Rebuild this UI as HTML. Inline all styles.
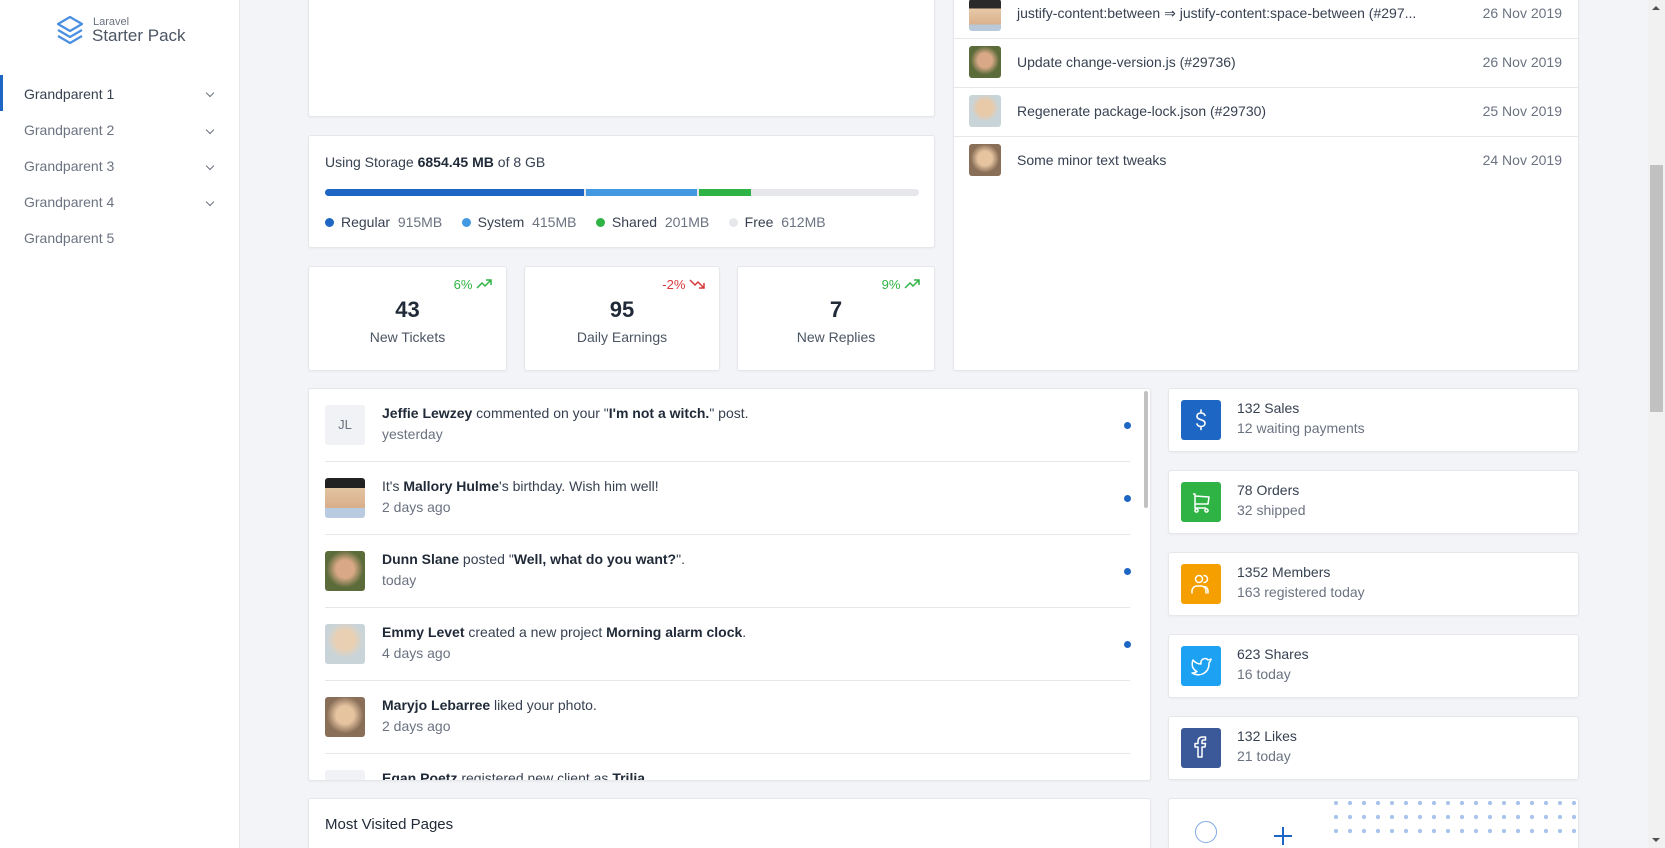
<!DOCTYPE html>
<html style="overflow:hidden;width:1665px;height:848px"><head><meta charset="utf-8"><style>
*{box-sizing:border-box;margin:0;padding:0}
html,body{overflow:hidden}
body{width:1665px;height:848px;background:#f3f4f7;font-family:"Liberation Sans",sans-serif;font-size:14px;color:#374151;position:relative}
.abs{position:absolute}
.card{position:absolute;background:#fff;border:1px solid #e5e7eb;border-radius:3px;box-shadow:0 1px 2px rgba(0,0,0,.04)}
.side{position:absolute;left:0;top:0;width:240px;height:848px;background:#fff;border-right:1px solid #e5e7eb}
.mi{position:absolute;left:24px;font-size:14px;color:#6b7280}
.chev{position:absolute;left:207px;width:6px;height:6px;border-right:1.3px solid #6b7280;border-bottom:1.3px solid #6b7280;transform:rotate(45deg)}
.av{position:absolute;border-radius:3px}
.crow{position:absolute;left:0;right:0;border-bottom:1px solid #e5e7eb}
.ctext{position:absolute;left:63px;font-size:14px;color:#374151}
.cdate{position:absolute;right:16px;font-size:14px;color:#6b7280}
.nrow{position:absolute;left:16px;width:805px;height:73px;border-bottom:1px solid #e5e7eb}
.nt{position:absolute;left:57px;top:0;font-size:14px;color:#374151;white-space:nowrap}
.nt b{color:#1f2937}
.ns{position:absolute;left:57px;top:21px;font-size:14px;color:#6b7280}
.dot{position:absolute;left:799px;top:18px;width:7px;height:7px;border-radius:50%;background:#1e66c4}
.sc .ic{position:absolute;left:12px;top:11px;width:40px;height:40px;border-radius:3px}
.sc .t1{position:absolute;left:68px;top:11px;font-size:14px;color:#374151}
.sc .t2{position:absolute;left:68px;top:31px;font-size:14px;color:#6b7280}
.stat .p{position:absolute;right:14px;top:10px;font-size:13px}
.stat .n{position:absolute;left:0;right:0;top:30px;text-align:center;font-size:22px;font-weight:bold;color:#1f2937}
.stat .l{position:absolute;left:0;right:0;top:62px;text-align:center;font-size:14px;color:#4b5563}
.lg{display:inline-block;width:9px;height:9px;border-radius:50%;margin-right:7px;vertical-align:-0px}
</style></head><body>
<div class="side">
  <svg class="abs" style="left:55px;top:15px" width="30" height="34" viewBox="0 0 30 34" fill="none" stroke="#4a8fe0" stroke-width="2.2" stroke-linejoin="round"><path d="M15 2 L27 9 L15 16 L3 9 Z"/><path d="M3 15 L15 22 L27 15"/><path d="M3 21 L15 28 L27 21"/></svg>
  <div class="abs" style="left:93px;top:16px;font-size:11px;color:#6b7280">Laravel</div>
  <div class="abs" style="left:92px;top:26px;font-size:17px;color:#4b5563">Starter Pack</div>
  <div class="abs" style="left:0;top:75px;width:3px;height:36px;background:#1e66c4"></div>
  <div class="mi" style="top:86px;color:#374151">Grandparent 1</div><div class="chev" style="top:90px"></div>
  <div class="mi" style="top:122px">Grandparent 2</div><div class="chev" style="top:127px"></div>
  <div class="mi" style="top:158px">Grandparent 3</div><div class="chev" style="top:163px"></div>
  <div class="mi" style="top:194px">Grandparent 4</div><div class="chev" style="top:199px"></div>
  <div class="mi" style="top:230px">Grandparent 5</div>
</div>

<div class="card" style="left:308px;top:-5px;width:627px;height:122px"></div>

<div class="card" style="left:308px;top:135px;width:627px;height:113px">
  <div class="abs" style="left:16px;top:18px;font-size:14px;color:#374151">Using Storage <b style="color:#1f2937">6854.45 MB</b> of 8 GB</div>
  <div class="abs" style="left:16px;top:53px;width:594px;height:7px;border-radius:4px;background:#e5e7eb;overflow:hidden">
    <div class="abs" style="left:0;top:0;width:259px;height:7px;background:#1e66c4"></div>
    <div class="abs" style="left:261px;top:0;width:111px;height:7px;background:#4299e1"></div>
    <div class="abs" style="left:374px;top:0;width:52px;height:7px;background:#2fb344"></div>
  </div>
  <div class="abs" style="left:16px;top:78px;font-size:14px;color:#374151;white-space:nowrap">
    <span class="lg" style="background:#1e66c4"></span>Regular &nbsp;<span style="color:#6b7280">915MB</span>&nbsp;&nbsp;&nbsp;&nbsp;
    <span class="lg" style="background:#4299e1"></span>System &nbsp;<span style="color:#6b7280">415MB</span>&nbsp;&nbsp;&nbsp;&nbsp;
    <span class="lg" style="background:#2fb344"></span>Shared &nbsp;<span style="color:#6b7280">201MB</span>&nbsp;&nbsp;&nbsp;&nbsp;
    <span class="lg" style="background:#e5e7eb"></span>Free &nbsp;<span style="color:#6b7280">612MB</span>
  </div>
</div>

<div class="card stat" style="left:308px;top:266px;width:199px;height:105px">
  <div class="p" style="color:#2fb344">6% <svg width="16" height="10" viewBox="0 0 16 10" fill="none" stroke="#2fb344" stroke-width="1.5"><path d="M1 9 L6 4 L9 7 L15 1 M10 1 H15 V6"/></svg></div>
  <div class="n">43</div><div class="l">New Tickets</div>
</div>
<div class="card stat" style="left:524px;top:266px;width:196px;height:105px">
  <div class="p" style="color:#d63939">-2% <svg width="16" height="10" viewBox="0 0 16 10" fill="none" stroke="#d63939" stroke-width="1.5"><path d="M1 1 L6 6 L9 3 L15 9 M10 9 H15 V4"/></svg></div>
  <div class="n">95</div><div class="l">Daily Earnings</div>
</div>
<div class="card stat" style="left:737px;top:266px;width:198px;height:105px">
  <div class="p" style="color:#2fb344">9% <svg width="16" height="10" viewBox="0 0 16 10" fill="none" stroke="#2fb344" stroke-width="1.5"><path d="M1 9 L6 4 L9 7 L15 1 M10 1 H15 V6"/></svg></div>
  <div class="n">7</div><div class="l">New Replies</div>
</div>

<div class="card" style="left:953px;top:-5px;width:626px;height:376px;overflow:hidden">
  <div class="crow" style="top:0;height:43px">
    <div class="av" style="left:15px;top:3px;width:32px;height:32px;background:linear-gradient(#2a2a2a 30%,#e8c9a8 30%,#d9b08c 80%,#b9c9d9 80%)"></div>
    <div class="ctext" style="top:9px">justify-content:between ⇒ justify-content:space-between (#297...</div>
    <div class="cdate" style="top:9px">26 Nov 2019</div>
  </div>
  <div class="crow" style="top:43px;height:49px">
    <div class="av" style="left:15px;top:7px;width:32px;height:32px;background:radial-gradient(circle at 50% 45%,#d9a987 30%,#5c6b3a 60%)"></div>
    <div class="ctext" style="top:15px">Update change-version.js (#29736)</div>
    <div class="cdate" style="top:15px">26 Nov 2019</div>
  </div>
  <div class="crow" style="top:92px;height:49px">
    <div class="av" style="left:15px;top:7px;width:32px;height:32px;background:radial-gradient(circle at 50% 40%,#e8c9a8 30%,#c9d4d9 55%)"></div>
    <div class="ctext" style="top:15px">Regenerate package-lock.json (#29730)</div>
    <div class="cdate" style="top:15px">25 Nov 2019</div>
  </div>
  <div class="abs" style="left:0;right:0;top:141px;height:49px">
    <div class="av" style="left:15px;top:7px;width:32px;height:32px;background:radial-gradient(circle at 50% 45%,#e6c4a0 30%,#8a6f58 60%)"></div>
    <div class="ctext" style="top:15px">Some minor text tweaks</div>
    <div class="cdate" style="top:15px">24 Nov 2019</div>
  </div>
</div>

<div class="card" style="left:308px;top:388px;width:843px;height:393px;overflow:hidden">
  <div class="abs" style="right:0;top:0;width:8px;height:393px;background:#fff"></div>
  <div class="abs" style="right:2px;top:2px;width:4px;height:117px;border-radius:2px;background:#c1c1c1"></div>
  <div class="nrow" style="top:0"><div class="av" style="left:0;top:16px;width:40px;height:40px;background:#f1f2f5;color:#6b7280;font-size:13px;text-align:center;line-height:40px">JL</div>
    <div class="nt" style="top:16px"><b>Jeffie Lewzey</b> commented on your "<b>I'm not a witch.</b>" post.</div><div class="ns" style="top:37px">yesterday</div><div class="dot" style="top:33px"></div></div>
  <div class="nrow" style="top:73px"><div class="av" style="left:0;top:16px;width:40px;height:40px;background:linear-gradient(#222 25%,#e3c4a2 25%,#d9ae8a 75%,#b8cbe0 75%)"></div>
    <div class="nt" style="top:16px">It's <b>Mallory Hulme</b>'s birthday. Wish him well!</div><div class="ns" style="top:37px">2 days ago</div><div class="dot" style="top:33px"></div></div>
  <div class="nrow" style="top:146px"><div class="av" style="left:0;top:16px;width:40px;height:40px;background:radial-gradient(circle at 50% 45%,#d9a987 30%,#5c6b3a 62%)"></div>
    <div class="nt" style="top:16px"><b>Dunn Slane</b> posted "<b>Well, what do you want?</b>".</div><div class="ns" style="top:37px">today</div><div class="dot" style="top:33px"></div></div>
  <div class="nrow" style="top:219px"><div class="av" style="left:0;top:16px;width:40px;height:40px;background:radial-gradient(circle at 50% 40%,#ead0b2 30%,#c9d4d9 58%)"></div>
    <div class="nt" style="top:16px"><b>Emmy Levet</b> created a new project <b>Morning alarm clock</b>.</div><div class="ns" style="top:37px">4 days ago</div><div class="dot" style="top:33px"></div></div>
  <div class="nrow" style="top:292px"><div class="av" style="left:0;top:16px;width:40px;height:40px;background:radial-gradient(circle at 50% 45%,#e6c4a0 30%,#8a6f58 62%)"></div>
    <div class="nt" style="top:16px"><b>Maryjo Lebarree</b> liked your photo.</div><div class="ns" style="top:37px">2 days ago</div></div>
  <div class="nrow" style="top:365px;border:none"><div class="av" style="left:0;top:16px;width:40px;height:40px;background:#f1f2f5"></div>
    <div class="nt" style="top:16px"><b>Egan Poetz</b> registered new client as <b>Trilia</b>.</div></div>
</div>

<div class="card sc" style="left:1168px;top:388px;width:411px;height:64px"><div class="ic" style="background:#1e66c4"><svg width="40" height="40" viewBox="0 0 40 40" fill="none" stroke="#fff" stroke-width="1.6" stroke-linecap="round"><path d="M24 15.5c-.5-1.5-2-2.5-4-2.5-2.5 0-4 1.3-4 3.2 0 4.5 8 2.6 8 7 0 2-1.7 3.3-4 3.3-2 0-3.5-1-4-2.5M20 10v3M20 26.5v3"/></svg></div><div class="t1">132 Sales</div><div class="t2">12 waiting payments</div></div>
<div class="card sc" style="left:1168px;top:470px;width:411px;height:64px"><div class="ic" style="background:#2fb344"><svg width="40" height="40" viewBox="0 0 40 40" fill="none" stroke="#fff" stroke-width="1.5" stroke-linejoin="round"><path d="M12 12h2v14h11M14 14l14 1-1 7H14"/><circle cx="15.5" cy="28.5" r="1.6"/><circle cx="25.5" cy="28.5" r="1.6"/></svg></div><div class="t1">78 Orders</div><div class="t2">32 shipped</div></div>
<div class="card sc" style="left:1168px;top:552px;width:411px;height:64px"><div class="ic" style="background:#f59f00"><svg width="40" height="40" viewBox="0 0 40 40" fill="none" stroke="#fff" stroke-width="1.5" stroke-linecap="round"><circle cx="18" cy="15" r="3.5"/><path d="M11 29v-2a5 5 0 0 1 5-5h4a5 5 0 0 1 5 5v2M23 11.5a3.5 3.5 0 0 1 0 7M27 29v-2a5 5 0 0 0-3-4.5"/></svg></div><div class="t1">1352 Members</div><div class="t2">163 registered today</div></div>
<div class="card sc" style="left:1168px;top:634px;width:411px;height:64px"><div class="ic" style="background:#1da1f2"><svg width="40" height="40" viewBox="0 0 40 40" fill="none" stroke="#fff" stroke-width="1.5" stroke-linejoin="round"><path d="M30 13c-1 .5-2 .7-3 1-1.5-2-5-2-6.5.5-.7 1-.8 2.3-.5 3.5-3 0-6-1.5-8-4 0 0-3.5 8 4 11.5-1.5 1-3.5 1.5-5 1.5 8 4.5 17 0 17-9.5 0-.2 0-.5 0-.7 1-1 1.7-2 2-3.3z"/></svg></div><div class="t1">623 Shares</div><div class="t2">16 today</div></div>
<div class="card sc" style="left:1168px;top:716px;width:411px;height:64px"><div class="ic" style="background:#3b5998"><svg width="40" height="40" viewBox="0 0 40 40" fill="none" stroke="#fff" stroke-width="1.5" stroke-linejoin="round"><path d="M17 19v10h4V19h3l.5-3.5H21v-2c0-1 .5-1.5 1.5-1.5h2V9h-3c-3 0-4.5 1.7-4.5 4.5v2h-3V19z"/></svg></div><div class="t1">132 Likes</div><div class="t2">21 today</div></div>

<div class="card" style="left:308px;top:798px;width:843px;height:50px;border-bottom:none;border-radius:3px 3px 0 0"><div class="abs" style="left:16px;top:17px;font-size:15px;color:#1f2937">Most Visited Pages</div></div>
<div class="card" style="left:1168px;top:798px;width:411px;height:50px;overflow:hidden;border-bottom:none;border-radius:3px 3px 0 0">
  <div class="abs" style="left:26px;top:22px;width:22px;height:22px;border-radius:50%;border:1.8px solid #7fa9e0"></div>
  <div class="abs" style="left:105px;top:36px;width:18px;height:1.8px;background:#1e66c4"></div>
  <div class="abs" style="left:113px;top:28px;width:1.8px;height:18px;background:#1e66c4"></div>
  <div class="abs" style="left:160px;top:0;width:250px;height:42px;background-image:radial-gradient(circle,#a9c5ea 2px,transparent 2.3px);background-size:14px 14px;background-position:0 -3px"></div>
</div>

<div class="abs" style="left:1648px;top:0;width:17px;height:848px;background:#f1f1f1"></div>
<div class="abs" style="left:1650px;top:165px;width:13px;height:247px;background:#c1c1c1"></div>
<div class="abs" style="left:1652px;top:6px;width:0;height:0;border-left:4px solid transparent;border-right:4px solid transparent;border-bottom:4px solid #505050"></div>
<div class="abs" style="left:1652px;top:838px;width:0;height:0;border-left:4px solid transparent;border-right:4px solid transparent;border-top:4px solid #505050"></div>
</body></html>
